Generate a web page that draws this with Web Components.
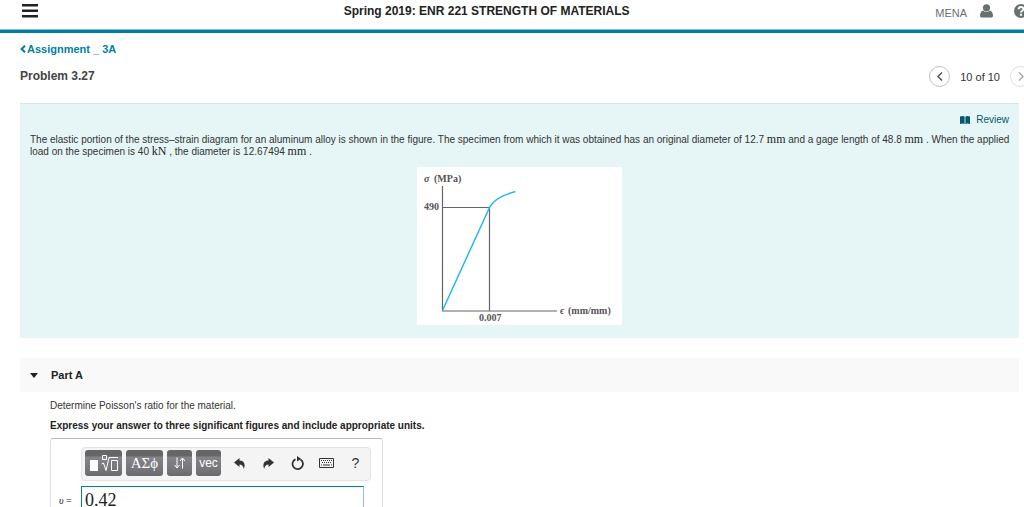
<!DOCTYPE html>
<html lang="en">
<head>
<meta charset="utf-8">
<title>Problem 3.27</title>
<style>
    html {
        scrollbar-width: none;
        overflow-x: hidden;
    }
    body {
        margin: 0;
        background: white;
        color: #333;
        font-family: "Liberation Sans", Arial, sans-serif;
        font-size: 11px;
        line-height: 12px;
        --accent: #007fa3;
        --accent-dark: #005a70;
        --panel: #e6f6f6;
    }
    main {
        display: block;
        padding: 0 5px 0 20px;
    }
</style>
</head>
<body>
<course-header user="MENA">Spring 2019: ENR 221 STRENGTH OF MATERIALS</course-header>
<main>
    <problem-nav assignment="Assignment _ 3A" position="10 of 10">Problem 3.27</problem-nav>
    <problem-intro>
        The elastic portion of the stress–strain diagram for an aluminum alloy is shown in the figure. The specimen from which it was obtained has an original diameter of 12.7 <math-unit>mm</math-unit> and a gage length of 48.8 <math-unit>mm</math-unit> . When the applied load on the specimen is 40 <math-unit>kN</math-unit> , the diameter is 12.67494 <math-unit>mm</math-unit> .
        <stress-figure slot="figure"></stress-figure>
    </problem-intro>
    <problem-part heading="Part A">
        <span slot="question">Determine Poisson's ratio for the material.</span>
        <span slot="instructions">Express your answer to three significant figures and include appropriate units.</span>
        <answer-box symbol="υ" value="0.42"></answer-box>
    </problem-part>
</main>
<script>
function attach(element, html) {
    const template = document.createElement('template');
    template.innerHTML = html;
    element.attachShadow({ mode: 'open' }).appendChild(template.content.cloneNode(true));
    return element.shadowRoot;
}

class CourseHeader extends HTMLElement {
    constructor() {
        super();
        const root = attach(this, `
            <style>
                :host {
                    display: flex;
                    align-items: center;
                    box-sizing: border-box;
                    height: 33px;
                    padding: 0 0 8px 22px;
                    border-bottom: 3px solid var(--accent);
                    box-shadow: inset 0 -1px #80bfd1;
                    color: #222;
                }
                button {
                    display: block;
                    padding: 0;
                    border: none;
                    background: none;
                    cursor: pointer;
                }
                svg {
                    display: block;
                }
                h1 {
                    flex-grow: 1;
                    margin: 0;
                    font-size: 12px;
                    line-height: 16px;
                    text-align: center;
                }
                #user {
                    display: flex;
                    align-items: center;
                    gap: 13px;
                    margin-right: -4px;
                    color: #6a7070;
                }
                #name {
                    padding-top: 3px;
                }
                #help {
                    margin-left: 8px;
                }
            </style>
            <button aria-label="Menu">
                <svg width="16" height="14" fill="#222"><path d="M0 0h16v2.500H0zM0 5.500h16V8H0zM0 11h16v2.500H0z"/></svg>
            </button>
            <h1><slot></slot></h1>
            <div id="user">
                <span id="name"></span>
                <button aria-label="Account">
                    <svg width="13" height="14" viewBox="0 0 13 14" fill="#6a7070">
                        <circle cx="6.5" cy="3.8" r="3.6"/>
                        <path d="M3 6.500Q6.500 9.500 10 6.500Q13 7.500 13 12Q13 13.500 11 13.500H2Q0 13.500 0 12Q0 7.500 3 6.500z"/>
                    </svg>
                </button>
                <button id="help" aria-label="Help">
                    <svg width="14" height="14" viewBox="0 0 14 14">
                        <circle cx="7" cy="7" r="7" fill="#6a7070"/>
                        <path d="M4.700 5.300C4.700 2.200 9.400 2.300 9.400 5C9.400 6.700 7 6.700 7 8.600" fill="none" stroke="white" stroke-width="2"/>
                        <path d="M6 9.700h2v2H6z" fill="white"/>
                    </svg>
                </button>
            </div>
        `);
        root.getElementById("name").innerText = this.getAttribute("user") ?? "";
    }
}
customElements.define('course-header', CourseHeader);

class ProblemNav extends HTMLElement {
    constructor() {
        super();
        const root = attach(this, `
            <style>
                :host {
                    display: flex;
                    justify-content: space-between;
                    align-items: flex-end;
                    box-sizing: border-box;
                    height: 70px;
                    padding: 8px 0 16px;
                }
                #titles {
                    display: flex;
                    flex-direction: column;
                    align-self: flex-start;
                    gap: 11px;
                }
                a {
                    display: flex;
                    align-items: center;
                    gap: 1px;
                    color: var(--accent);
                    font-weight: bold;
                    line-height: 16px;
                    text-decoration: none;
                }
                h2 {
                    margin: 0;
                    color: #444;
                    font-size: 12px;
                    line-height: 16px;
                }
                nav {
                    display: flex;
                    align-items: center;
                    gap: 10px;
                    margin-right: -12px;
                }
                button {
                    display: flex;
                    align-items: center;
                    justify-content: center;
                    width: 21px;
                    height: 21px;
                    padding: 0;
                    border: 1px solid #c0c0c0;
                    border-radius: 50%;
                    background: white;
                    color: #555;
                }
                button:disabled {
                    border-color: #ddd;
                    color: #aaa;
                }
            </style>
            <div id="titles">
                <a href="#">
                    <svg width="6" height="8" fill="none" stroke="currentColor" stroke-width="2"><path d="M5 0.700L1.600 4L5 7.300"/></svg>
                    <span id="assignment"></span>
                </a>
                <h2><slot></slot></h2>
            </div>
            <nav>
                <button aria-label="Previous">
                    <svg width="6" height="9" fill="none" stroke="currentColor" stroke-width="1.5"><path d="M5 0.500L1 4.500L5 8.500"/></svg>
                </button>
                <span id="position"></span>
                <button aria-label="Next" disabled>
                    <svg width="6" height="9" fill="none" stroke="currentColor" stroke-width="1.5"><path d="M1 0.500L5 4.500L1 8.500"/></svg>
                </button>
            </nav>
        `);
        root.getElementById("assignment").innerText = this.getAttribute("assignment") ?? "";
        root.getElementById("position").innerText = this.getAttribute("position") ?? "";
    }
}
customElements.define('problem-nav', ProblemNav);

class MathUnit extends HTMLElement {
    constructor() {
        super();
        // line-height 0 keeps the serif text from stretching the line it sits in
        attach(this, `
            <style>
                :host {
                    font-family: "Liberation Serif", "Times New Roman", serif;
                    font-size: 12px;
                    line-height: 0;
                    color: #222;
                }
            </style>
            <slot></slot>
        `.trim().replace(/>\s+</g, "><"));
    }
}
customElements.define('math-unit', MathUnit);

class ProblemIntro extends HTMLElement {
    constructor() {
        super();
        attach(this, `
            <style>
                :host {
                    display: flex;
                    flex-direction: column;
                    padding: 8px 10px 13px;
                    border-top: 1px solid #d8e4e6;
                    background: var(--panel);
                    font-size: 10px;
                }
                a {
                    display: flex;
                    align-items: center;
                    align-self: flex-end;
                    gap: 6px;
                    color: var(--accent-dark);
                    line-height: 16px;
                    text-decoration: none;
                }
                p {
                    margin: 6px -4px 9px 0;
                }
                slot[name=figure] {
                    display: flex;
                    justify-content: center;
                }
            </style>
            <a href="#">
                <svg width="10" height="8" fill="currentColor"><path d="M0 0.500Q2.500 -0.500 4.600 0.500V8Q2.500 7 0 8zM5.400 0.500Q7.500 -0.500 10 0.500V8Q7.500 7 5.400 8z"/></svg>
                Review
            </a>
            <p><slot></slot></p>
            <slot name="figure"></slot>
        `);
    }
}
customElements.define('problem-intro', ProblemIntro);

class StressFigure extends HTMLElement {
    constructor() {
        super();
        attach(this, `
            <style>
                :host {
                    display: block;
                    background: white;
                }
                svg {
                    display: block;
                }
                text {
                    font-family: "Liberation Serif", "Times New Roman", serif;
                    font-size: 10px;
                    font-weight: bold;
                    fill: #555;
                }
            </style>
            <svg width="205" height="158" viewBox="0 0 205 158" role="img" aria-label="Stress-strain diagram">
                <g fill="none" stroke="#666" stroke-width="1.2">
                    <path d="M25.500 19V144H140"/>
                    <path d="M25.500 40.500H72.500V144"/>
                </g>
                <path d="M25.500 143.500L72.500 40.500C78 31 88 27.500 98.500 24.500" fill="none" stroke="#29b6f0" stroke-width="1.500"/>
                <text x="7" y="15" font-style="italic">σ</text>
                <text x="17" y="15">(MPa)</text>
                <text x="7" y="43">490</text>
                <text x="62" y="154">0.007</text>
                <text x="143" y="147" font-style="italic">ϵ</text>
                <text x="151" y="147">(mm/mm)</text>
            </svg>
        `);
    }
}
customElements.define('stress-figure', StressFigure);

class ProblemPart extends HTMLElement {
    constructor() {
        super();
        const root = attach(this, `
            <style>
                :host {
                    display: block;
                    margin-top: 20px;
                }
                h3 {
                    margin: 0;
                    background: #f9f9f9;
                }
                button {
                    display: flex;
                    align-items: center;
                    gap: 13px;
                    width: 100%;
                    padding: 9px 10px;
                    border: none;
                    background: none;
                    color: #222;
                    font: bold 11px/16px "Liberation Sans", Arial, sans-serif;
                }
                #body {
                    display: flex;
                    flex-direction: column;
                    align-items: flex-start;
                    gap: 4px;
                    padding: 6px 0 20px 30px;
                }
                p {
                    margin: 0;
                    font-size: 10px;
                    line-height: 16px;
                }
                p.bold {
                    color: #222;
                    font-weight: bold;
                }
            </style>
            <h3>
                <button aria-expanded="true">
                    <svg width="8" height="5" fill="currentColor"><path d="M0 0h8L4 5z"/></svg>
                    <span id="heading"></span>
                </button>
            </h3>
            <div id="body">
                <p><slot name="question"></slot></p>
                <p class="bold"><slot name="instructions"></slot></p>
                <slot></slot>
            </div>
        `);
        root.getElementById("heading").innerText = this.getAttribute("heading") ?? "";
    }
}
customElements.define('problem-part', ProblemPart);

class MathToolbar extends HTMLElement {
    constructor() {
        super();
        attach(this, `
            <style>
                :host {
                    display: flex;
                    align-items: center;
                    gap: 4px;
                    padding: 2px 3px 4px;
                    border: 1px solid #e4e4e4;
                    border-radius: 4px;
                    background: #f4f4f4;
                }
                button {
                    display: flex;
                    flex-shrink: 0;
                    align-items: center;
                    justify-content: center;
                    box-sizing: border-box;
                    width: 25px;
                    height: 26px;
                    padding: 0;
                    border: none;
                    border-radius: 3px;
                    background: linear-gradient(#666 0, #666 6px, #85848a 7px, #77767b 19px, #6a6a6e 100%);
                    color: white;
                    font: 12px/16px "Liberation Sans", Arial, sans-serif;
                }
                .wide {
                    width: 37px;
                }
                .greek {
                    font: 15px/16px "Liberation Serif", "Times New Roman", serif;
                }
                #tools {
                    display: flex;
                }
                #tools button {
                    width: 29px;
                    background: none;
                    color: #333;
                    font-size: 14px;
                }
            </style>
            <button class="wide" aria-label="Templates">
                <svg width="30" height="20" fill="none" stroke="white">
                    <path d="M1 7h8v11H1z" fill="white" stroke="none"/>
                    <path d="M13.500 2.500h4v4h-4z"/>
                    <path d="M12.500 11L14.500 10L17 17.500L20 4.500H29"/>
                    <path d="M22.500 7.500h6v10h-6z"/>
                </svg>
            </button>
            <button class="wide greek" aria-label="Symbols">ΑΣϕ</button>
            <button aria-label="Subscript and superscript">
                <svg width="11" height="12" fill="none" stroke="white"><path d="M3 0.500V11M0.500 8L3 11L5.500 8M8.500 11.500V1M6 4L8.500 1L11 4"/></svg>
            </button>
            <button>vec</button>
            <div id="tools">
                <button aria-label="Undo">
                    <svg width="11" height="11" fill="currentColor"><path d="M0 4.500L5.500 0V2.600C9.500 2.800 12 5.500 9.800 11C9.300 8 8 6.500 5.500 6.500V9z"/></svg>
                </button>
                <button aria-label="Redo">
                    <svg width="11" height="11" fill="currentColor"><path d="M11 4.500L5.500 0V2.600C1.500 2.800 -1 5.500 1.200 11C1.700 8 3 6.500 5.500 6.500V9z"/></svg>
                </button>
                <button aria-label="Reset">
                    <svg width="13" height="14" viewBox="0 0 13 14">
                        <path d="M9.500 3.500A5.200 5.200 0 1 1 4.500 3.200" fill="none" stroke="currentColor" stroke-width="1.800"/>
                        <path d="M6 0L10.200 3L6 5.500z" fill="currentColor"/>
                    </svg>
                </button>
                <button aria-label="Keyboard shortcuts">
                    <svg width="15" height="10" fill="none" stroke="currentColor">
                        <path d="M0.500 0.500h14v9H0.500z"/>
                        <path d="M2 2.500h11M3 4.500h10" stroke-dasharray="1 1"/>
                        <path d="M2 7h1M4 7h7M12 7h1"/>
                    </svg>
                </button>
                <button aria-label="Help">?</button>
            </div>
        `);
    }
}
customElements.define('math-toolbar', MathToolbar);

class AnswerBox extends HTMLElement {
    constructor() {
        super();
        const root = attach(this, `
            <style>
                :host {
                    display: grid;
                    grid-template-columns: 22px 290px;
                    row-gap: 5px;
                    align-items: center;
                    padding: 8px 11px 12px 8px;
                    border: 1px solid #e0e0e0;
                    border-top-color: #bbb;
                    border-radius: 3px;
                }
                math-toolbar {
                    grid-column: 2;
                }
                label {
                    font: 10px/16px "Liberation Serif", "Times New Roman", serif;
                    color: #222;
                }
                input {
                    box-sizing: border-box;
                    width: 283px;
                    height: 29px;
                    padding: 0 3px;
                    border: 1px solid #8fc3d3;
                    border-top-color: var(--accent);
                    border-left-color: var(--accent);
                    color: #222;
                    font: 18px/24px "Liberation Serif", "Times New Roman", serif;
                }
            </style>
            <math-toolbar></math-toolbar>
            <label for="answer"><i id="symbol"></i> =</label>
            <input id="answer" type="text">
        `);
        root.getElementById("symbol").innerText = this.getAttribute("symbol") ?? "";
        root.getElementById("answer").value = this.getAttribute("value") ?? "";
    }
}
customElements.define('answer-box', AnswerBox);
</script>
</body>
</html>
